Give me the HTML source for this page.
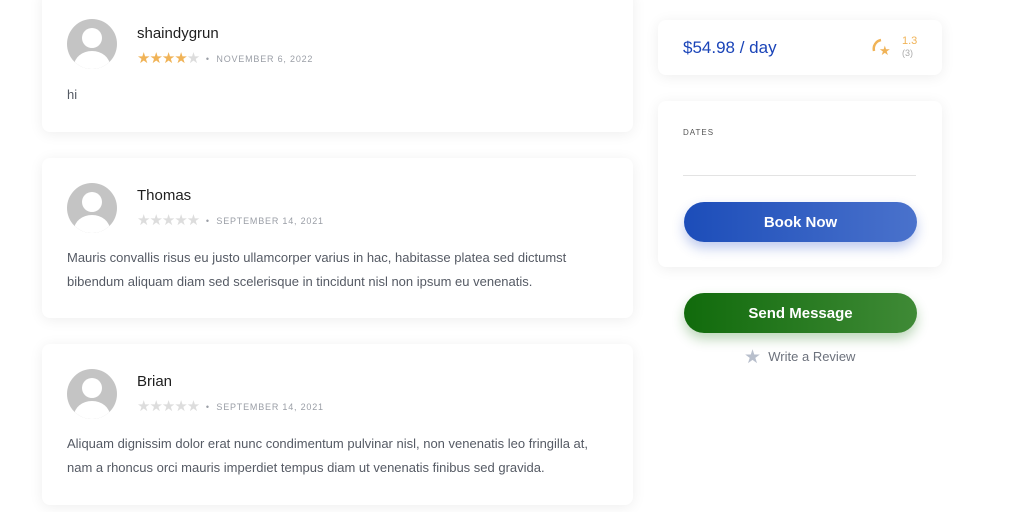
<!DOCTYPE html>
<html><head><style>
*{margin:0;padding:0;box-sizing:border-box}
body{width:1024px;height:512px;overflow:hidden;background:#fff;font-family:"Liberation Sans",sans-serif;position:relative}
.card{position:absolute;left:42px;width:591px;background:#fff;border-radius:8px;box-shadow:0 2px 14px rgba(0,0,0,0.07)}
.av{position:absolute;left:25px;width:50px;height:50px;border-radius:50%;background:#c4c4c4;overflow:hidden}
.av:before{content:"";position:absolute;left:15px;top:9px;width:20px;height:20px;border-radius:50%;background:#fff}
.av:after{content:"";position:absolute;left:7px;top:32px;width:36px;height:30px;border-radius:50% 50% 0 0;background:#fff}
.name{position:absolute;left:95px;font-size:15px;color:#1e1e1e}
.meta{position:absolute;left:95px;font-size:9px;color:#9a9ea6;letter-spacing:.8px;white-space:nowrap}
.meta .s{font-size:15px;letter-spacing:-1px;color:#ddd;vertical-align:-1px}
.meta .g{color:#f0b357}
.txt{position:absolute;left:25px;font-size:13px;color:#555a64;line-height:24px;width:545px}
.box{position:absolute;left:658px;width:284px;background:#fff;border-radius:8px;box-shadow:0 2px 14px rgba(0,0,0,0.07)}
.btn{position:absolute;left:684px;width:233px;height:40px;border-radius:20px;color:#fff;font-size:15px;text-align:center;line-height:42px;font-weight:bold}
</style></head><body>
<div class="card" style="top:-10px;height:142px">
<div class="av" style="top:29px"></div>
<div class="name" style="top:35px">shaindygrun</div>
<div class="meta" style="top:59px"><span class="s"><span class="g">★★★★</span>★</span> &nbsp;•&nbsp; NOVEMBER 6, 2022</div>
<div class="txt" style="top:93px">hi</div>
</div>
<div class="card" style="top:158px;height:160px">
<div class="av" style="top:25px"></div>
<div class="name" style="top:29px">Thomas</div>
<div class="meta" style="top:53px"><span class="s">★★★★★</span> &nbsp;•&nbsp; SEPTEMBER 14, 2021</div>
<div class="txt" style="top:88px">Mauris convallis risus eu justo ullamcorper varius in hac, habitasse platea sed dictumst bibendum aliquam diam sed scelerisque in tincidunt nisl non ipsum eu venenatis.</div>
</div>
<div class="card" style="top:344px;height:161px">
<div class="av" style="top:25px"></div>
<div class="name" style="top:29px">Brian</div>
<div class="meta" style="top:53px"><span class="s">★★★★★</span> &nbsp;•&nbsp; SEPTEMBER 14, 2021</div>
<div class="txt" style="top:88px">Aliquam dignissim dolor erat nunc condimentum pulvinar nisl, non venenatis leo fringilla at, nam a rhoncus orci mauris imperdiet tempus diam ut venenatis finibus sed gravida.</div>
</div>
<div class="box" style="top:20px;height:55px">
<div style="position:absolute;left:25px;top:18px;font-size:17px;color:#1a44b8">$54.98 / day</div>
<svg style="position:absolute;left:213px;top:16px" width="22" height="22" viewBox="0 0 22 22"><path d="M3 15 A9 9 0 0 1 10 4" stroke="#f0b357" stroke-width="2.5" fill="none"/><text x="8" y="19" font-size="13" fill="#f0b357">★</text></svg>
<div style="position:absolute;left:244px;top:15px;font-size:11px;color:#f0b357">1.3</div>
<div style="position:absolute;left:244px;top:28px;font-size:9px;color:#aaa">(3)</div>
</div>
<div class="box" style="top:101px;height:166px">
<div style="position:absolute;left:25px;top:27px;font-size:8px;letter-spacing:1px;color:#555">DATES</div>
<div style="position:absolute;left:25px;top:74px;width:233px;height:1px;background:#e3e3e3"></div>
</div>
<div class="btn" style="top:202px;background:linear-gradient(90deg,#1c4db9,#4a72cc);box-shadow:0 6px 12px rgba(40,80,200,.3)">Book Now</div>
<div class="btn" style="top:293px;background:linear-gradient(90deg,#116b0c,#3f8a36);box-shadow:0 6px 12px rgba(30,120,20,.3)">Send Message</div>
<div style="position:absolute;left:744px;top:346px;font-size:13px;color:#6c717c"><span style="color:#b8bfcc;font-size:19px;vertical-align:-2px">★</span>&nbsp; Write a Review</div>
</body></html>
